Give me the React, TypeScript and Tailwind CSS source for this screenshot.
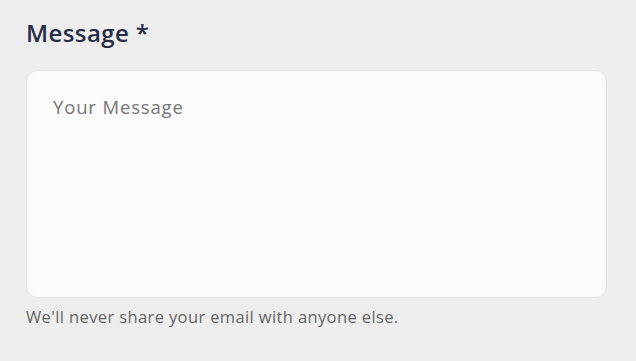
export default function App() {
  return (
    <div className="min-h-[361px] w-[636px] bg-[#ededed] px-[26px] pt-[16px] font-['Open_Sans',sans-serif]">
      <label htmlFor="message" className="block text-[24px] font-semibold leading-[34px] tracking-[0.4px] text-[#282d47]">
        Message *
      </label>
      <textarea
        id="message"
        placeholder="Your Message"
        className="mt-[20px] block h-[228px] w-[581px] resize-none rounded-[12px] border border-[#e6e6e6] bg-[#fafafa] px-[26px] py-[22px] text-[18.5px] tracking-[0.85px] text-[#333] outline-none placeholder:text-[#777]"
      />
      <p className="mt-[8px] text-[16.5px] leading-[22px] tracking-[0.38px] text-[#666]">We'll never share your email with anyone else.</p>
    </div>
  )
}
